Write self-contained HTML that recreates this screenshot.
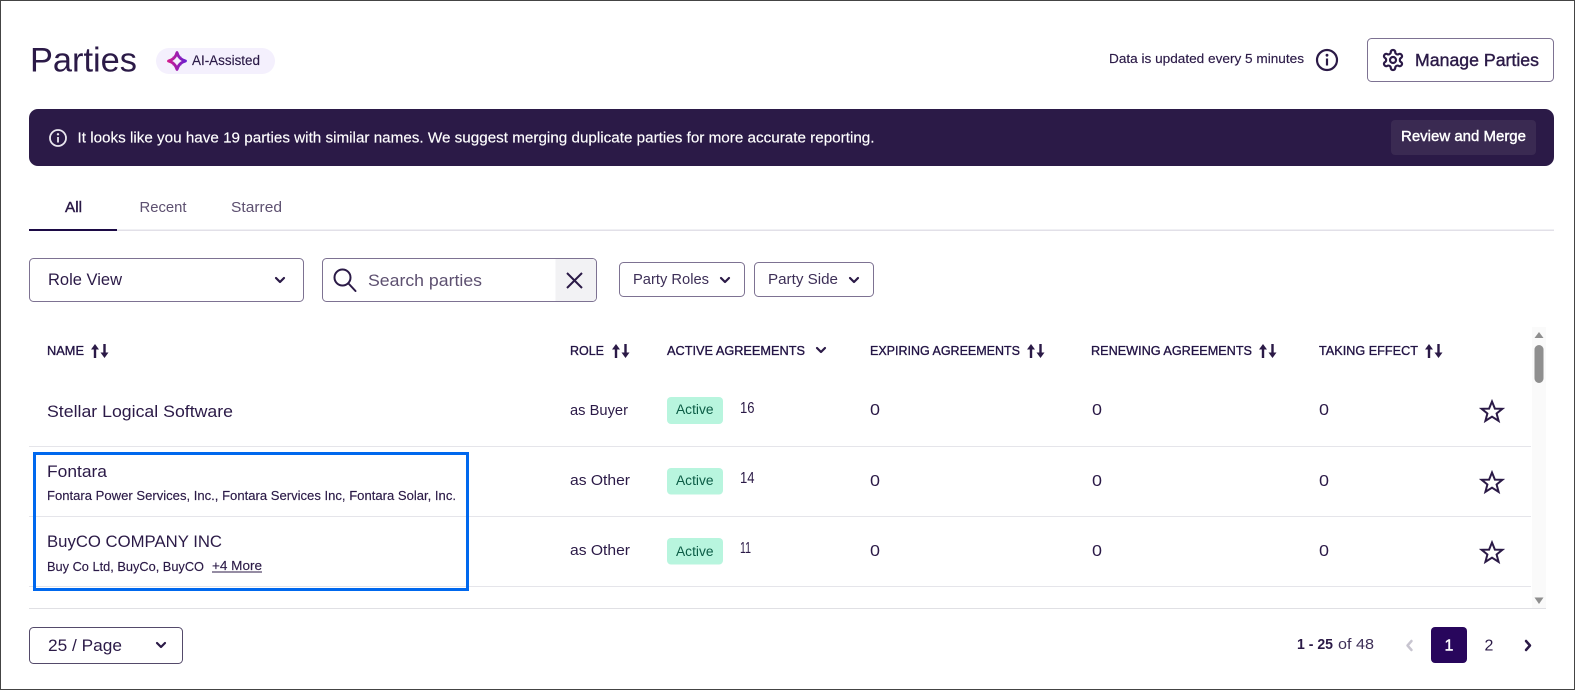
<!DOCTYPE html>
<html lang="en">
<head>
<meta charset="utf-8">
<title>Parties</title>
<style>
html,body{margin:0;padding:0;background:#fff;width:1575px;height:690px;overflow:hidden}
svg{display:block}
text{font-family:"Liberation Sans",sans-serif;fill:#2b1a47}
.h{font-size:13px;fill:#231445;stroke:#231445;stroke-width:.35px}
.c{font-size:14.5px}
.n{font-size:15.5px}
.ln{stroke:#e5e5ea;stroke-width:1}
.box{fill:#fff;stroke:#7d7292;stroke-width:1}
.chev{fill:none;stroke:#2b1a47;stroke-width:2.2;stroke-linecap:round;stroke-linejoin:round}
.s{stroke:#2b1a47;stroke-width:.15px}
.m{stroke:#2b1a47;stroke-width:.4px}
.w{fill:#fff;stroke:#fff;stroke-width:.15px}
.wm{fill:#fff;stroke:#fff;stroke-width:.4px}
</style>
</head>
<body>
<svg xmlns="http://www.w3.org/2000/svg" width="1575" height="690" viewBox="0 0 1575 690">
<defs>
<linearGradient id="g" gradientUnits="userSpaceOnUse" x1="168" x2="186" y1="61" y2="61"><stop offset="0" stop-color="#d21c8c"/><stop offset="1" stop-color="#6a1fd0"/></linearGradient>
<g id="sort" fill="#2b1a47"><path d="M4 0L0 5.500h2.800V14h2.400V5.500H8z"/><path d="M13.500 14L17.500 8.500h-2.800V0h-2.400v8.500H9.500z"/></g>
<path id="ch" class="chev" d="M-4-2L0 2L4-2"/>
<path id="star" fill="none" stroke="#2b1a47" stroke-width="2" stroke-linejoin="miter" d="M0-10.500L2.900-3.400L10.400-3.200L4.600 1.500L6.600 8.900L0 4.700L-6.600 8.900L-4.600 1.500L-10.400-3.200L-2.900-3.400Z"/>
</defs>

<rect width="1575" height="690" fill="#fff"/>
<rect x=".5" y=".5" width="1574" height="689" fill="none" stroke="#444" stroke-width="1"/>

<!-- Header -->
<text x="30" y="71.500" font-size="34" textLength="107" lengthAdjust="spacingAndGlyphs">Parties</text>
<rect x="156" y="48" width="119" height="26" rx="13" fill="#f4f0fd"/>
<path d="M177 54L179 59L184 61L179 63L177 68L175 63L170 61L175 59Z" fill="#c9c0fa" transform="rotate(45 177 61)"/>
<path d="M177 52.500Q178.800 59.200 185.500 61Q178.800 62.800 177 69.500Q175.200 62.800 168.500 61Q175.200 59.200 177 52.500Z" fill="#f4f0fd" stroke="url(#g)" stroke-width="2.800" stroke-linejoin="round"/>
<text class="s" x="192" y="65" font-size="13.500" textLength="68" lengthAdjust="spacingAndGlyphs">AI-Assisted</text>

<text class="s" x="1109" y="63" font-size="13" textLength="195" lengthAdjust="spacingAndGlyphs">Data is updated every 5 minutes</text>
<circle cx="1327" cy="60" r="10" fill="none" stroke="#2b1a47" stroke-width="2.200"/>
<rect x="1325.900" y="58.500" width="2.200" height="7" fill="#2b1a47"/><circle cx="1327" cy="55.200" r="1.400" fill="#2b1a47"/>

<rect x="1367.500" y="38.500" width="186" height="43" rx="4" class="box"/>
<g transform="translate(1381 48)" fill="none" stroke="#2b1a47" stroke-width="2.200" stroke-linecap="round" stroke-linejoin="round">
<path d="M12.220 2h-.44a2 2 0 0 0-2 2v.18a2 2 0 0 1-1 1.730l-.43.25a2 2 0 0 1-2 0l-.15-.08a2 2 0 0 0-2.730.73l-.22.38a2 2 0 0 0 .73 2.730l.15.1a2 2 0 0 1 1 1.720v.51a2 2 0 0 1-1 1.740l-.15.09a2 2 0 0 0-.73 2.730l.22.38a2 2 0 0 0 2.730.73l.15-.08a2 2 0 0 1 2 0l.43.25a2 2 0 0 1 1 1.730V20a2 2 0 0 0 2 2h.44a2 2 0 0 0 2-2v-.18a2 2 0 0 1 1-1.730l.43-.25a2 2 0 0 1 2 0l.15.08a2 2 0 0 0 2.730-.73l.22-.39a2 2 0 0 0-.73-2.730l-.15-.08a2 2 0 0 1-1-1.740v-.5a2 2 0 0 1 1-1.740l.15-.09a2 2 0 0 0 .73-2.730l-.22-.38a2 2 0 0 0-2.730-.73l-.15.08a2 2 0 0 1-2 0l-.43-.25a2 2 0 0 1-1-1.730V4a2 2 0 0 0-2-2z"/>
<circle cx="12" cy="12" r="3"/></g>
<text class="m" x="1415" y="66" font-size="17.500" textLength="124" lengthAdjust="spacingAndGlyphs">Manage Parties</text>

<!-- Banner -->
<rect x="29" y="109" width="1525" height="57" rx="9" fill="#2b1a47"/>
<circle cx="58" cy="138" r="8" fill="none" stroke="#e9e6ee" stroke-width="1.800"/>
<rect x="57.100" y="137" width="1.800" height="5.500" fill="#e9e6ee"/><circle cx="58" cy="134.300" r="1.200" fill="#e9e6ee"/>
<text class="w" x="77.500" y="142.500" font-size="15" textLength="797" lengthAdjust="spacingAndGlyphs">It looks like you have 19 parties with similar names. We suggest merging duplicate parties for more accurate reporting.</text>
<rect x="1391" y="120" width="145" height="35" rx="4" fill="#3a2a52"/>
<text class="wm" x="1401" y="141" font-size="14.500" textLength="125" lengthAdjust="spacingAndGlyphs">Review and Merge</text>

<!-- Tabs -->
<rect x="117" y="229.500" width="1437" height="1.500" fill="#e2e0e8"/>
<rect x="29" y="229" width="88" height="2" fill="#1c0a45"/>
<text class="m" x="65" y="212" font-size="14.500" textLength="17" lengthAdjust="spacingAndGlyphs">All</text>
<text x="139.500" y="212" font-size="14.500" textLength="47" lengthAdjust="spacingAndGlyphs" style="fill:#5d5070">Recent</text>
<text x="231" y="212" font-size="14.500" textLength="51" lengthAdjust="spacingAndGlyphs" style="fill:#5d5070">Starred</text>

<!-- Filters -->
<rect x="29.500" y="258.500" width="274" height="43" rx="4" class="box"/>
<text x="48" y="285" font-size="17" textLength="74" lengthAdjust="spacingAndGlyphs">Role View</text>
<use href="#ch" x="280" y="280"/>

<rect x="322.500" y="258.500" width="274" height="43" rx="4" class="box"/>
<path d="M555.500 259h37a3.500 3.500 0 0 1 3.500 3.500v35a3.500 3.500 0 0 1-3.500 3.500h-37z" fill="#f2f2f4"/>
<circle cx="342.500" cy="277.500" r="8" fill="none" stroke="#2b1a47" stroke-width="2"/>
<path d="M348.500 283.500L355.500 291" stroke="#2b1a47" stroke-width="2" stroke-linecap="round"/>
<text x="368" y="286" font-size="17" textLength="114" lengthAdjust="spacingAndGlyphs" style="fill:#5d5070">Search parties</text>
<path d="M567 273L582 288M582 273L567 288" stroke="#2b1a47" stroke-width="2" fill="none"/>

<rect x="619.500" y="262.500" width="125" height="34" rx="4" class="box"/>
<text x="633" y="284" font-size="15" textLength="76" lengthAdjust="spacingAndGlyphs" style="fill:#3d2f57">Party Roles</text>
<use href="#ch" x="725" y="280"/>
<rect x="754.500" y="262.500" width="119" height="34" rx="4" class="box"/>
<text x="768" y="284" font-size="15" textLength="70" lengthAdjust="spacingAndGlyphs" style="fill:#3d2f57">Party Side</text>
<use href="#ch" x="854" y="280"/>

<!-- Table head -->
<text class="h" x="47" y="355" textLength="37" lengthAdjust="spacingAndGlyphs">NAME</text><use href="#sort" x="91" y="344"/>
<text class="h" x="570" y="355" textLength="34" lengthAdjust="spacingAndGlyphs">ROLE</text><use href="#sort" x="612" y="344"/>
<text class="h" x="667" y="355" textLength="138" lengthAdjust="spacingAndGlyphs">ACTIVE AGREEMENTS</text><use href="#ch" x="821" y="350"/>
<text class="h" x="870" y="355" textLength="150" lengthAdjust="spacingAndGlyphs">EXPIRING AGREEMENTS</text><use href="#sort" x="1027" y="344"/>
<text class="h" x="1091" y="355" textLength="161" lengthAdjust="spacingAndGlyphs">RENEWING AGREEMENTS</text><use href="#sort" x="1259" y="344"/>
<text class="h" x="1319" y="355" textLength="99" lengthAdjust="spacingAndGlyphs">TAKING EFFECT</text><use href="#sort" x="1425" y="344"/>

<!-- Row 1 -->
<text x="47" y="417" font-size="17" textLength="186" lengthAdjust="spacingAndGlyphs">Stellar Logical Software</text>
<text class="c" x="570" y="415" textLength="58" lengthAdjust="spacingAndGlyphs">as Buyer</text>
<rect x="667" y="397" width="56" height="27" rx="4" fill="#b8f5de"/>
<text x="676" y="414" font-size="13.500" textLength="37.500" lengthAdjust="spacingAndGlyphs" style="fill:#0b5c45">Active</text>
<text class="n" x="740" y="413" textLength="14.500" lengthAdjust="spacingAndGlyphs">16</text>
<text class="n" x="870" y="415" textLength="10" lengthAdjust="spacingAndGlyphs">0</text><text class="n" x="1092" y="415" textLength="10" lengthAdjust="spacingAndGlyphs">0</text><text class="n" x="1319" y="415" textLength="10" lengthAdjust="spacingAndGlyphs">0</text>
<use href="#star" x="1492" y="412"/>
<line class="ln" x1="29" x2="1531" y1="446.500" y2="446.500"/>

<!-- Row 2 -->
<text x="47" y="477" font-size="17" textLength="60" lengthAdjust="spacingAndGlyphs">Fontara</text>
<text class="s" x="47" y="500" font-size="13" textLength="409" lengthAdjust="spacingAndGlyphs">Fontara Power Services, Inc., Fontara Services Inc, Fontara Solar, Inc.</text>
<text class="c" x="570" y="485" textLength="60" lengthAdjust="spacingAndGlyphs">as Other</text>
<rect x="667" y="468" width="56" height="26.500" rx="4" fill="#b8f5de"/>
<text x="676" y="485" font-size="13.500" textLength="37.500" lengthAdjust="spacingAndGlyphs" style="fill:#0b5c45">Active</text>
<text class="n" x="740" y="483" textLength="14.500" lengthAdjust="spacingAndGlyphs">14</text>
<text class="n" x="870" y="486" textLength="10" lengthAdjust="spacingAndGlyphs">0</text><text class="n" x="1092" y="486" textLength="10" lengthAdjust="spacingAndGlyphs">0</text><text class="n" x="1319" y="486" textLength="10" lengthAdjust="spacingAndGlyphs">0</text>
<use href="#star" x="1492" y="483"/>
<line class="ln" x1="29" x2="1531" y1="516.500" y2="516.500"/>

<!-- Row 3 -->
<text x="47" y="547" font-size="17" textLength="175" lengthAdjust="spacingAndGlyphs">BuyCO COMPANY INC</text>
<text class="s" x="47" y="571" font-size="13" textLength="157" lengthAdjust="spacingAndGlyphs">Buy Co Ltd, BuyCo, BuyCO</text>
<text class="s" x="212" y="570" font-size="13" textLength="50" lengthAdjust="spacingAndGlyphs">+4 More</text>
<rect x="212" y="571.500" width="50" height="1" fill="#2b1a47"/>
<text class="c" x="570" y="555" textLength="60" lengthAdjust="spacingAndGlyphs">as Other</text>
<rect x="667" y="538" width="56" height="26.500" rx="4" fill="#b8f5de"/>
<text x="676" y="556" font-size="13.500" textLength="37.500" lengthAdjust="spacingAndGlyphs" style="fill:#0b5c45">Active</text>
<text class="n" x="740" y="553" textLength="11" lengthAdjust="spacingAndGlyphs">11</text>
<text class="n" x="870" y="556" textLength="10" lengthAdjust="spacingAndGlyphs">0</text><text class="n" x="1092" y="556" textLength="10" lengthAdjust="spacingAndGlyphs">0</text><text class="n" x="1319" y="556" textLength="10" lengthAdjust="spacingAndGlyphs">0</text>
<use href="#star" x="1492" y="553"/>
<line class="ln" x1="29" x2="1531" y1="586.500" y2="586.500"/>

<!-- Selection box -->
<rect x="34.500" y="453.500" width="433" height="136" fill="none" stroke="#0068ee" stroke-width="3"/>

<!-- Scrollbar -->
<rect x="1532" y="327" width="14" height="281" fill="#fafafa"/>
<path d="M1539 332L1543.500 338H1534.500Z" fill="#8f8f8f"/>
<rect x="1534.500" y="345" width="9" height="38" rx="4.500" fill="#8f8f8f"/>
<path d="M1539 604L1543.500 597.500H1534.500Z" fill="#8f8f8f"/>
<line x1="29" x2="1546" y1="608.500" y2="608.500" stroke="#e0e0e4" stroke-width="1"/>

<!-- Footer -->
<rect x="29.500" y="627.500" width="153" height="36" rx="4" fill="#fff" stroke="#544a6a"/>
<text x="48" y="651" font-size="17" textLength="74" lengthAdjust="spacingAndGlyphs">25 / Page</text>
<use href="#ch" x="161" y="645"/>

<text x="1297" y="649" font-size="15" textLength="36" lengthAdjust="spacingAndGlyphs" font-weight="700">1 - 25</text>
<text x="1338" y="649" font-size="15" textLength="36" lengthAdjust="spacingAndGlyphs" style="fill:#3d2f57">of 48</text>
<path d="M1411.500 641L1407.500 645.500L1411.500 650" fill="none" stroke="#c8c5d0" stroke-width="2.500" stroke-linecap="round" stroke-linejoin="round"/>
<rect x="1431" y="627" width="36" height="36" rx="4" fill="#28065c"/>
<text class="wm" x="1449" y="650.500" font-size="16" text-anchor="middle">1</text>
<text x="1489" y="650.500" font-size="16" text-anchor="middle">2</text>
<path d="M1526 641L1530 645.500L1526 650" fill="none" stroke="#2b1a47" stroke-width="2.500" stroke-linecap="round" stroke-linejoin="round"/>
</svg>
</body>
</html>
